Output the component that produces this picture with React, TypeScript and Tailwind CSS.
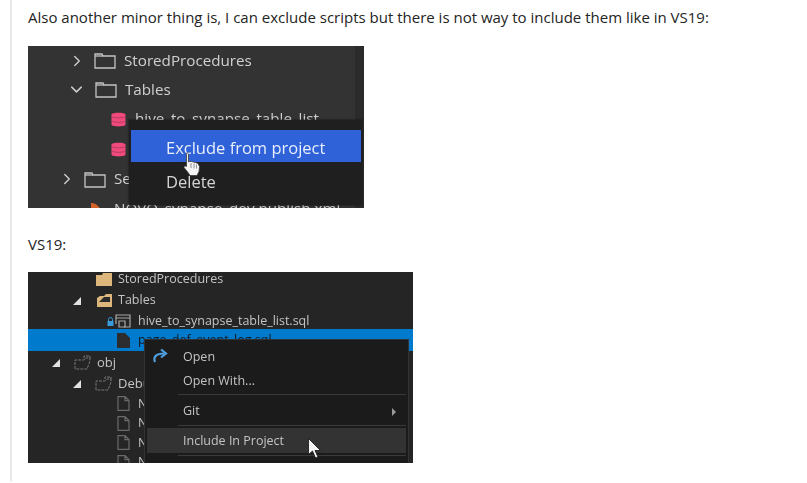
import { ChevronRight, ChevronDown } from 'lucide-react';

const font = { fontFamily: '"Open Sans", "Noto Sans", sans-serif' };

function OutlineFolder() {
    return (
        <svg width="22" height="17" viewBox="0 0 22 17" fill="none" stroke="#c4c4c4" strokeWidth="1.3" className="shrink-0">
            <path d="M1 2h7l1 2h12v12H1z" />
            <path d="M1 4h8" />
        </svg>
    );
}

function Db() {
    return (
        <svg width="15" height="15" viewBox="0 0 15 15" className="shrink-0">
            <path d="M.5 2.500C.5 0 14.500 0 14.500 2.500V12.500C14.500 15 .5 15 .5 12.500z" fill="#f04a7c" />
            <path d="M.5 5q7 2 14 0M.5 9.500q7 2 14 0" fill="none" stroke="#9c3a58" strokeWidth="0.7" />
        </svg>
    );
}

function HandCursor() {
    return (
        <svg width="18" height="25" viewBox="0 0 18 25" className="absolute left-[155px] top-[106px]">
            <path d="M3 1.500c1-1 2.500-.5 2.500 1V10l1-.5h2l2 .5 2 .5 2.500 1 1.500 3-.5 5-2 4H7l-2-3-4-5c0-1.500 1-2 2.500-1V2z" fill="#f4f4f4" stroke="#3a3a3a" strokeWidth="0.8" />
            <path d="M8 11v5M11 11.500v5M13.500 12.500v4" stroke="#777" strokeWidth="0.8" />
        </svg>
    );
}

function FirstShot() {
    return (
        <div className="w-[336px] h-[162px] overflow-hidden bg-[#333333]">
            <div className="relative h-[162px] blur-[0.35px] text-[#d0d0d0] text-[15.200px] leading-none">
                <div className="absolute right-0 top-0 bottom-0 w-[9px] bg-[#2b2b2b]" />
                <div className="relative flex flex-col">
                    <div className="h-[29px] flex items-center pl-[42px]">
                        <ChevronRight size={18} strokeWidth={1.8} className="shrink-0 -ml-[2px] mr-[8px]" />
                        <OutlineFolder />
                        <span className="ml-[8px]">StoredProcedures</span>
                    </div>
                    <div className="h-[29px] flex items-center pl-[39px]">
                        <ChevronDown size={19} strokeWidth={1.8} className="shrink-0 mr-[9px]" />
                        <OutlineFolder />
                        <span className="ml-[8px]">Tables</span>
                    </div>
                    <div className="h-[30px] flex items-center pl-[83px]">
                        <Db />
                        <span className="ml-[9px]">hive_to_synapse_table_list</span>
                    </div>
                    <div className="h-[30px] flex items-center pl-[83px]">
                        <Db />
                    </div>
                    <div className="h-[30px] flex items-center pl-[30px]">
                        <ChevronRight size={18} strokeWidth={1.8} className="shrink-0 mr-[8px]" />
                        <OutlineFolder />
                        <span className="ml-[8px]">Se</span>
                    </div>
                    <div className="h-[30px] flex items-center pl-[63px]">
                        <svg width="11" height="11" viewBox="0 0 11 11" className="shrink-0 -mt-[3px]">
                            <path d="M0 1c5 0 10 4 10 10H0z" fill="#d2622a" />
                        </svg>
                        <span className="ml-[12px] whitespace-nowrap">NOVO_synapse_dev.publish.xml</span>
                    </div>
                </div>
                <div className="absolute left-[101px] top-[74px] w-[233px] h-[85px] bg-[#1f1f1f] pt-[10px] pl-[2px] pr-[1px] shadow-[0_0_2px_#111]">
                    <div className="h-[32px] bg-[#2f62d8] flex items-center pl-[35px] pt-[4px] text-[#e8eefb] text-[16.500px]">Exclude from project</div>
                    <div className="h-[40px] flex items-center pl-[35px] text-[#d4d4d4] text-[16.500px]">Delete</div>
                </div>
                <HandCursor />
            </div>
        </div>
    );
}

function Triangle() {
    return (
        <svg width="8" height="8" viewBox="0 0 8 8" className="shrink-0">
            <path d="M8 0v8H0z" fill="#e2e2e2" />
        </svg>
    );
}

function DashedFolder() {
    return (
        <svg width="17" height="15" viewBox="0 0 17 15" fill="none" stroke="#777777" strokeWidth="1" strokeDasharray="3 1" className="shrink-0">
            <path d="M1 14V5h9l2-2h4v3L13 14zM10 3V1h6v2" />
        </svg>
    );
}

function FileIcon({ color = '#6a6a6a' }: { color?: string }) {
    return (
        <svg width="13" height="15" viewBox="0 0 13 15" fill="none" stroke={color} strokeWidth="1.2" className="shrink-0">
            <path d="M1 .6h7l4 4v9.800H1zM8 .6v4h4" />
        </svg>
    );
}

function SecondShot() {
    return (
        <div className="w-[385px] h-[191px] overflow-hidden bg-[#252526]">
            <div className="relative flow-root h-[191px] blur-[0.35px] text-[#c4c4c4] text-[12.500px] leading-none">
                <div className="flex flex-col -mt-[3px]">
                    <div className="h-[21px] flex items-center pl-[68px]">
                        <svg width="17" height="15" viewBox="0 0 17 15" className="shrink-0">
                            <path d="M0 3h6l1-2h9v13H0z" fill="#dcb67a" />
                        </svg>
                        <span className="ml-[5px]">StoredProcedures</span>
                    </div>
                    <div className="h-[21px] flex items-center pl-[45px]">
                        <Triangle />
                        <svg width="17" height="13" viewBox="0 0 17 13" className="shrink-0 ml-[15px]">
                            <path d="M1 4l3-2h4l2-2h6v13H1z" fill="#dcb67a" />
                            <path d="M3 8l5-5h6v5z" fill="#2a2a2a" />
                        </svg>
                        <span className="ml-[5px]">Tables</span>
                    </div>
                    <div className="h-[18px] pt-[2px] flex items-center pl-[79px]">
                        <svg width="7" height="9" viewBox="0 0 7 9" className="shrink-0">
                            <path d="M1.500 4V2.500a2 2 0 0 1 4 0V4" fill="none" stroke="#3a9bdc" />
                            <rect x="0.500" y="4" width="6" height="5" fill="#3a9bdc" />
                        </svg>
                        <svg width="16" height="15" viewBox="0 0 16 15" fill="none" stroke="#a8a8a8" strokeWidth="1.200" className="shrink-0 ml-[1px]">
                            <path d="M1 10V1h14v12H9M1 4h14" />
                            <path d="M4 7h6v6H4z" />
                        </svg>
                        <span className="ml-[7px] whitespace-nowrap text-[12.500px]">hive_to_synapse_table_list.sql</span>
                    </div>
                    <div className="h-[22px] bg-[#007acc] flex items-center pl-[89px]">
                        <svg width="13" height="15" viewBox="0 0 13 15" className="shrink-0">
                            <path d="M0 0h8l5 5v10H0z" fill="#2d2d30" />
                        </svg>
                        <span className="ml-[8px] text-[#101820]">page_def_event_log.sql</span>
                    </div>
                    <div className="h-[22px] pt-[1px] flex items-center pl-[24px]">
                        <Triangle />
                        <span className="ml-[14px]"><DashedFolder /></span>
                        <span className="ml-[6px] text-[13px]">obj</span>
                    </div>
                    <div className="h-[21px] flex items-center pl-[45px]">
                        <Triangle />
                        <span className="ml-[14px]"><DashedFolder /></span>
                        <span className="ml-[6px] text-[13px]">Debug</span>
                    </div>
                    <div className="h-[19.500px] flex items-center pl-[89px]"><FileIcon /><span className="ml-[8px]">N</span></div>
                    <div className="h-[19.500px] flex items-center pl-[89px]"><FileIcon /><span className="ml-[8px]">N</span></div>
                    <div className="h-[19.500px] flex items-center pl-[89px]"><FileIcon /><span className="ml-[8px]">N</span></div>
                    <div className="h-[19.500px] flex items-center pl-[89px]"><FileIcon /><span className="ml-[8px]">N</span></div>
                </div>
                <div className="absolute left-[116px] top-[67px] w-[265px] h-[130px] bg-[#1b1b1c] border border-[#333337] pl-[2px] pr-[2px]">
                    <div className="h-[32px] pt-[3px] flex items-center">
                        <svg width="17" height="14" viewBox="0 0 17 14" fill="none" stroke="#4d9fe0" strokeWidth="2.200" className="shrink-0 ml-[5px] -mt-[3px]">
                            <path d="M3 13C1 8 4 4.500 12 4.500" />
                            <path d="M9 .5l5 4-5 4" />
                        </svg>
                        <span className="ml-[14px]">Open</span>
                    </div>
                    <div className="h-[18px] flex items-center pl-[36px]">Open With...</div>
                    <div className="ml-[31px] mt-[4px] h-px bg-[#3a3a3a]" />
                    <div className="h-[30px] pt-[3px] flex items-center pl-[36px] pr-[10px] justify-between">
                        <span>Git</span>
                        <svg width="4" height="8" viewBox="0 0 4 8" className="shrink-0"><path d="M0 0l4 4-4 4z" fill="#9a9a9a" /></svg>
                    </div>
                    <div className="ml-[31px] h-px bg-[#3a3a3a]" />
                    <div className="h-[25px] mt-[2px] pt-[2px] bg-[#333334] flex items-center pl-[36px]">Include In Project</div>
                    <div className="ml-[31px] mt-[2px] h-px bg-[#3a3a3a]" />
                </div>
                <svg width="13" height="21" viewBox="0 0 13 21" className="absolute left-[280px] top-[166px]">
                    <path d="M.5.5v16l4-3.500 3 7 2.500-1-3-6.500h5.500z" fill="#f5f5f5" stroke="#111" strokeWidth="0.8" />
                </svg>
            </div>
        </div>
    );
}

export default function App() {
    return (
        <div className="h-[483px] w-[807px] overflow-hidden bg-white" style={font}>
            <div className="ml-[10px] h-[482px] border-l-2 border-[#e8e8e8] rounded-bl-[3px] pl-[16px] text-[#242424]">
                <p className="pt-[7px] h-[46px] text-[15px] leading-[20px] whitespace-nowrap">Also another minor thing is, I can exclude scripts but there is not way to include them like in VS19:</p>
                <FirstShot />
                <p className="pt-[26px] h-[64px] text-[15px] leading-[20px]">VS19:</p>
                <SecondShot />
            </div>
        </div>
    );
}
